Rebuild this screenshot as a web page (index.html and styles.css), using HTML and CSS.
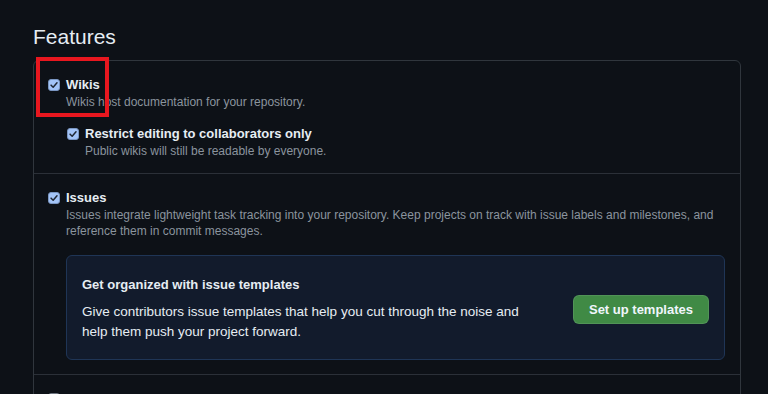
FILE: index.html
```html
<!DOCTYPE html>
<html lang="en">
<head>
    <meta charset="UTF-8">
    <meta name="viewport" content="width=device-width, initial-scale=1.0">
    <title>Features</title>
    <link rel="stylesheet" href="styles.css">
</head>
<body>
    <h2 class="title">Features</h2>

    <div class="features">
        <!-- Wikis -->
        <div class="feature">
            <div class="option">
                <span class="check checked">
                    <svg viewBox="0 0 12 12" width="10" height="10"><path d="M2.5 6.2 L5 8.6 L9.6 3.4" fill="none" stroke="#1f2733" stroke-width="1.8" stroke-linecap="round" stroke-linejoin="round"/></svg>
                </span>
                <div>
                    <div class="label">Wikis</div>
                    <p class="note">Wikis host documentation for your repository.</p>
                </div>
            </div>
            <div class="option sub">
                <span class="check checked">
                    <svg viewBox="0 0 12 12" width="10" height="10"><path d="M2.5 6.2 L5 8.6 L9.6 3.4" fill="none" stroke="#1f2733" stroke-width="1.8" stroke-linecap="round" stroke-linejoin="round"/></svg>
                </span>
                <div>
                    <div class="label">Restrict editing to collaborators only</div>
                    <p class="note">Public wikis will still be readable by everyone.</p>
                </div>
            </div>
            <!-- рамка-выделение -->
            <span class="highlight"></span>
        </div>

        <!-- Issues -->
        <div class="feature">
            <div class="option">
                <span class="check checked">
                    <svg viewBox="0 0 12 12" width="10" height="10"><path d="M2.5 6.2 L5 8.6 L9.6 3.4" fill="none" stroke="#1f2733" stroke-width="1.8" stroke-linecap="round" stroke-linejoin="round"/></svg>
                </span>
                <div class="grow">
                    <div class="label">Issues</div>
                    <p class="note">Issues integrate lightweight task tracking into your repository. Keep projects on track with issue labels and milestones, and reference them in commit messages.</p>

                    <div class="templates">
                        <div class="templates-text">
                            <h3>Get organized with issue templates</h3>
                            <p>Give contributors issue templates that help you cut through the noise and help them push your project forward.</p>
                        </div>
                        <button class="btn-green">Set up templates</button>
                    </div>
                </div>
            </div>
        </div>

        <!-- Sponsorships -->
        <div class="feature">
            <div class="option">
                <span class="check"></span>
                <div>
                    <div class="label">Sponsorships</div>
                    <p class="note">Sponsorships help your community know how to financially support this repository.</p>
                </div>
            </div>
        </div>
    </div>
</body>
</html>
```

FILE: styles.css
```css
body {
    margin: 0;
    padding: 24px 27px 0 33px;
    background: #0d1117;
    color: #e6edf3;
    font-family: 'Liberation Sans', Arial, sans-serif;
    overflow: hidden;
}

.title {
    margin: 0 0 10px;
    font-size: 21px;
    font-weight: 400;
    line-height: 26px;
    color: #e6edf3;
}

.features {
    border: 1px solid #30363d;
    border-radius: 6px;
}

.feature {
    position: relative;
    padding: 16px 15px 14px 14px;
}

.feature + .feature {
    border-top: 1px solid #2b3038;
}

.option {
    display: flex;
    align-items: flex-start;
    gap: 6px;
}

.option.sub {
    margin: 16px 0 0 19px;
}

.grow {
    flex: 1;
}

.check {
    flex: none;
    box-sizing: border-box;
    width: 12px;
    height: 12px;
    margin-top: 2px;
    border: 1px solid #6e7681;
    border-radius: 3px;
    background: #21262d;
    display: flex;
    align-items: center;
    justify-content: center;
}

.check.checked {
    background: #a3c4f7;
    border-color: #7a96c2;
}

.label {
    font-size: 13px;
    font-weight: 700;
    line-height: 16px;
    color: #e6edf3;
}

.note {
    margin: 1px 0 0;
    font-size: 12px;
    line-height: 16px;
    color: #8b949e;
}

.templates {
    display: flex;
    align-items: center;
    justify-content: space-between;
    margin-top: 16px;
    padding: 21px 15px 17px;
    border: 1px solid #1f3556;
    border-radius: 6px;
    background: #121b2c;
}

.templates-text {
    max-width: 442px;
}

.templates h3 {
    margin: 0;
    font-size: 13px;
    font-weight: 700;
    line-height: 16px;
    color: #e6edf3;
}

.templates p {
    margin: 9px 0 0;
    font-size: 13.5px;
    line-height: 20px;
    color: #e6edf3;
}

.btn-green {
    height: 29px;
    padding: 0 15px;
    border: 1px solid rgba(240, 246, 252, 0.1);
    border-radius: 6px;
    background: #408a45;
    color: #f0f6fc;
    font-family: 'Liberation Sans', Arial, sans-serif;
    font-size: 13px;
    font-weight: 700;
    cursor: pointer;
}

.highlight {
    position: absolute;
    left: 2px;
    top: -4px;
    width: 73px;
    height: 60px;
    box-sizing: border-box;
    border: 4px solid #e8171f;
    pointer-events: none;
}
```
